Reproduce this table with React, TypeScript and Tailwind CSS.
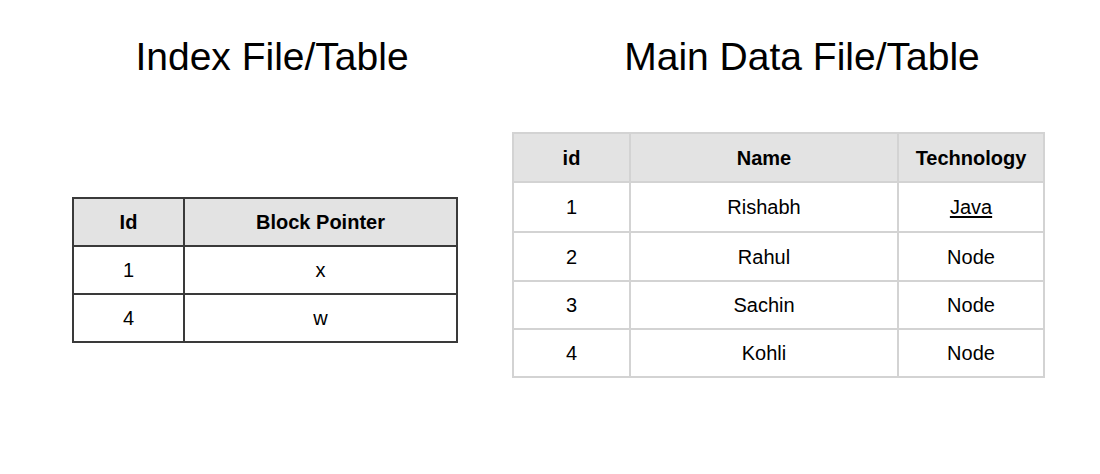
import React from 'react';

const font = { fontFamily: '"Liberation Sans", Arial, Helvetica, sans-serif' };

const indexRows = [
  { id: '1', ptr: 'x' },
  { id: '4', ptr: 'w' },
];

const dataRows = [
  { id: '1', name: 'Rishabh', tech: 'Java', link: true, h: 'h-[50px]' },
  { id: '2', name: 'Rahul', tech: 'Node', h: 'h-[49px]' },
  { id: '3', name: 'Sachin', tech: 'Node', h: 'h-[48px]' },
  { id: '4', name: 'Kohli', tech: 'Node', h: 'h-[48px]' },
];

export default function App() {
  return (
    <div className="w-[1100px] h-[474px] bg-white text-black flex" style={font}>
      {/* index table */}
      <div className="ml-[72px] w-[386px] flex flex-col">
        <h1 className="mt-[38px] pl-[14px] text-center text-[39px] leading-[38px] font-normal">Index File/Table</h1>
        <table className="mt-[121px] w-[386px] border-collapse text-[20px]">
          <thead>
            <tr className="h-[48px] bg-[#e3e3e3]">
              <th className="w-[111px] border-2 border-[#3a3a3a] font-bold">Id</th>
              <th className="border-2 border-[#3a3a3a] font-bold">Block Pointer</th>
            </tr>
          </thead>
          <tbody>
            {indexRows.map((r) => (
              <tr key={r.id} className="h-[48px]">
                <td className="border-2 border-[#3a3a3a] text-center">{r.id}</td>
                <td className="border-2 border-[#3a3a3a] text-center">{r.ptr}</td>
              </tr>
            ))}
          </tbody>
        </table>
      </div>

      {/* main data table */}
      <div className="ml-[54px] w-[533px] flex flex-col">
        <h1 className="mt-[38px] pl-[47px] text-center text-[39px] leading-[38px] font-normal">Main Data File/Table</h1>
        <table className="mt-[56px] w-[533px] border-collapse text-[20px]">
          <thead>
            <tr className="h-[49px] bg-[#e3e3e3]">
              <th className="w-[117px] border-2 border-[#d3d3d3] font-bold">id</th>
              <th className="w-[268px] border-2 border-[#d3d3d3] font-bold">Name</th>
              <th className="border-2 border-[#d3d3d3] font-bold">Technology</th>
            </tr>
          </thead>
          <tbody>
            {dataRows.map((r) => (
              <tr key={r.id} className={r.h}>
                <td className="border-2 border-[#d3d3d3] text-center">{r.id}</td>
                <td className="border-2 border-[#d3d3d3] text-center">{r.name}</td>
                <td className="border-2 border-[#d3d3d3] text-center">
                  {r.link ? <span className="underline underline-offset-2">{r.tech}</span> : r.tech}
                </td>
              </tr>
            ))}
          </tbody>
        </table>
      </div>
    </div>
  );
}
